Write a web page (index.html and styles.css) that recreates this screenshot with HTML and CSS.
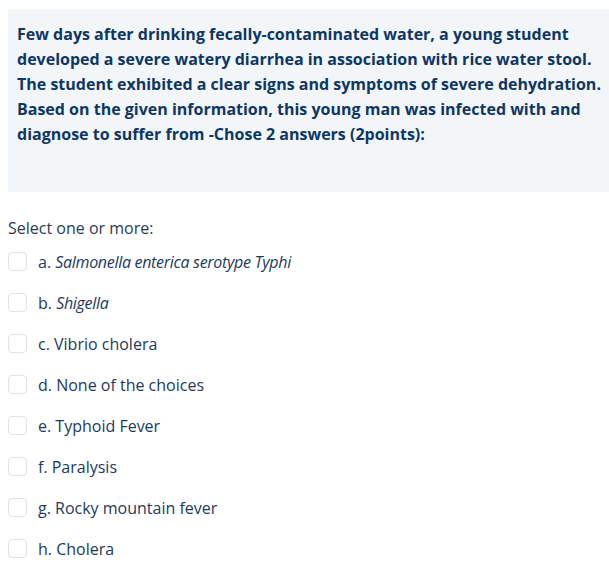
FILE: index.html
```html
<!DOCTYPE html>
<html>
<head>
<meta charset="utf-8">
<link rel="stylesheet" href="styles.css">
</head>
<body>
<div class="page">
  <div class="qtext">
    <p>Few days after drinking fecally-contaminated water, a young student developed a severe watery diarrhea in association with rice water stool. The student exhibited a clear signs and symptoms of severe dehydration. Based on the given information, this young man was infected with and diagnose to suffer from -Chose 2 answers (2points):</p>
  </div>
  <div class="answers">
    <div class="prompt">Select one or more:</div>
    <div class="opt"><span class="box"></span><span class="label">a. <i>Salmonella enterica serotype Typhi</i></span></div>
    <div class="opt"><span class="box"></span><span class="label">b. <i>Shigella</i></span></div>
    <div class="opt"><span class="box"></span><span class="label">c. Vibrio cholera</span></div>
    <div class="opt"><span class="box"></span><span class="label">d. None of the choices</span></div>
    <div class="opt"><span class="box"></span><span class="label">e. Typhoid Fever</span></div>
    <div class="opt"><span class="box"></span><span class="label">f. Paralysis</span></div>
    <div class="opt"><span class="box"></span><span class="label">g. Rocky mountain fever</span></div>
    <div class="opt"><span class="box"></span><span class="label">h. Cholera</span></div>
  </div>
</div>
</body>
</html>
```

FILE: styles.css
```css
html, body {
  margin: 0;
  padding: 0;
  background: #ffffff;
  overflow: hidden;
}
body {
  font-family: "Open Sans", "Liberation Sans", sans-serif;
  color: #1c3a5e;
}
.page {
  padding: 9px 0 0 8px;
}
.qtext {
  background: #f3f6f9;
  border-radius: 3px 0 0 3px;
  padding: 13px 0 0 9px;
  height: 183px;
  box-sizing: border-box;
}
.qtext p {
  margin: 0;
  font-weight: 700;
  font-size: 16px;
  line-height: 25px;
  color: #0e3764;
}
.answers {
  padding-top: 24px;
}
.prompt {
  font-size: 16px;
  line-height: 24px;
  color: #2a3b4f;
  margin-bottom: 1px;
}
.opt {
  display: flex;
  align-items: center;
  gap: 11px;
  height: 41px;
}
.box {
  width: 17px;
  height: 17px;
  border: 1px solid #dfe3e7;
  border-radius: 4px;
  background: #fff;
  flex: none;
}
.label {
  font-size: 16px;
  line-height: 24px;
  color: #1c3a5e;
}
.label i {
  letter-spacing: -0.3px;
}
```
